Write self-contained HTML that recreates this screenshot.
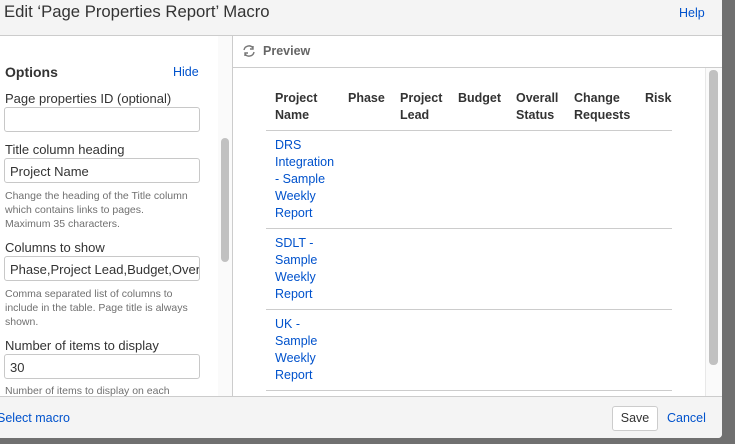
<!DOCTYPE html>
<html><head><style>
*{margin:0;padding:0;box-sizing:border-box}
body{width:735px;height:444px;background:#707070;font-family:"Liberation Sans",Arial,sans-serif;position:relative;overflow:hidden;color:#333}
.a{position:absolute}
.dlg{left:0;top:0;width:722px;height:438px;background:#fff;border-radius:0 0 4px 0;overflow:hidden}
.hdr{left:0;top:0;width:722px;height:36px;background:#f4f4f4;border-bottom:1px solid #ccc}
.lbl{font-size:13px;color:#333;left:5px}
.inp{left:4px;width:196px;height:25px;border:1px solid #c8c8c8;border-radius:3px;font-size:13px;padding:5px 0 0 5px;color:#333;white-space:nowrap;overflow:hidden}
.hint{left:5px;font-size:10.5px;color:#707070;line-height:14px;width:185px}
.th{font-size:12.5px;font-weight:bold;color:#333;line-height:17px;top:90px}
.lk{left:275px;font-size:12.5px;color:#0052cc;line-height:17px}
.hr{left:266px;width:406px;height:1px;background:#ccc}
</style></head><body>
<div class="a dlg">
 <div class="a hdr"></div>
 <div class="a" style="left:4px;top:2px;font-size:16.7px;color:#333">Edit ‘Page Properties Report’ Macro</div>
 <div class="a" style="left:679px;top:6px;font-size:12.5px;color:#0052cc">Help</div>
 <div class="a" style="left:5px;top:64px;font-size:14px;font-weight:bold;color:#333">Options</div>
 <div class="a" style="left:173px;top:65px;font-size:12.5px;color:#0052cc">Hide</div>
 <div class="a lbl" style="top:91px">Page properties ID (optional)</div>
 <div class="a inp" style="top:107px"></div>
 <div class="a lbl" style="top:142px">Title column heading</div>
 <div class="a inp" style="top:158px">Project Name</div>
 <div class="a hint" style="top:189px">Change the heading of the Title column which contains links to pages. Maximum 35 characters.</div>
 <div class="a lbl" style="top:240px">Columns to show</div>
 <div class="a inp" style="top:256px">Phase,Project Lead,Budget,Overall</div>
 <div class="a hint" style="top:287px">Comma separated list of columns to include in the table. Page title is always shown.</div>
 <div class="a lbl" style="top:338px">Number of items to display</div>
 <div class="a inp" style="top:354px">30</div>
 <div class="a hint" style="top:384px">Number of items to display on each</div>
 <div class="a" style="left:218px;top:36px;width:14px;height:360px;background:#fafafa"></div>
 <div class="a" style="left:221px;top:138px;width:8px;height:124px;background:#c1c1c1;border-radius:4px"></div>
 <div class="a" style="left:232px;top:36px;width:1px;height:360px;background:#ccc"></div>
 <div class="a" style="left:233px;top:67px;width:489px;height:1px;background:#ccc"></div>
 <svg class="a" style="left:242px;top:45px" width="14" height="12" viewBox="0 0 14 12"><path d="M2 5 A5 5 0 0 1 11 3 M11 1 V4 H8 M12 7 A5 5 0 0 1 3 9 M3 11 V8 H6" fill="none" stroke="#777" stroke-width="1.4"/></svg>
 <div class="a" style="left:263px;top:44px;font-size:12.5px;font-weight:bold;color:#666">Preview</div>
 <div class="a th" style="left:275px">Project<br>Name</div>
 <div class="a th" style="left:348px">Phase</div>
 <div class="a th" style="left:400px">Project<br>Lead</div>
 <div class="a th" style="left:458px">Budget</div>
 <div class="a th" style="left:516px">Overall<br>Status</div>
 <div class="a th" style="left:574px">Change<br>Requests</div>
 <div class="a th" style="left:645px;width:27px;overflow:hidden">Risks</div>
 <div class="a hr" style="top:130px"></div>
 <div class="a lk" style="top:137px">DRS<br>Integration<br>- Sample<br>Weekly<br>Report</div>
 <div class="a hr" style="top:228px"></div>
 <div class="a lk" style="top:235px">SDLT -<br>Sample<br>Weekly<br>Report</div>
 <div class="a hr" style="top:309px"></div>
 <div class="a lk" style="top:316px">UK -<br>Sample<br>Weekly<br>Report</div>
 <div class="a hr" style="top:390px"></div>
 <div class="a" style="left:705px;top:68px;width:17px;height:328px;background:#fafafa;border-left:1px solid #e8e8e8"></div>
 <div class="a" style="left:709px;top:70px;width:9px;height:295px;background:#c1c1c1;border-radius:4px"></div>
 <div class="a" style="left:0;top:396px;width:722px;height:42px;background:#f4f4f4;border-top:1px solid #ccc"></div>
 <div class="a" style="left:-3px;top:411px;font-size:12.5px;color:#0052cc">Select macro</div>
 <div class="a" style="left:612px;top:406px;width:46px;height:25px;background:#fff;border:1px solid #ccc;border-radius:3px;font-size:12.5px;text-align:center;line-height:23px;color:#333">Save</div>
 <div class="a" style="left:667px;top:411px;font-size:12.5px;color:#0052cc">Cancel</div>
</div>
</body></html>
